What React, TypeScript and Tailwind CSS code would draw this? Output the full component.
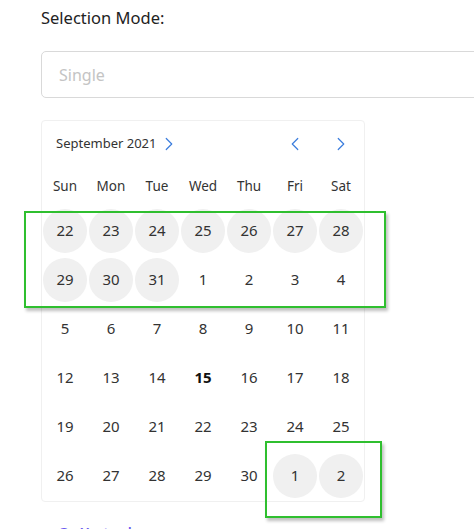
import { ChevronLeft, ChevronRight } from "lucide-react"

const WEEKDAYS = ["Sun", "Mon", "Tue", "Wed", "Thu", "Fri", "Sat"]

type Day = { n: number; marked?: boolean; today?: boolean }

const WEEKS: Day[][] = [
  [22, 23, 24, 25, 26, 27, 28].map((n) => ({ n, marked: true })),
  [
    { n: 29, marked: true },
    { n: 30, marked: true },
    { n: 31, marked: true },
    { n: 1 },
    { n: 2 },
    { n: 3 },
    { n: 4 },
  ],
  [5, 6, 7, 8, 9, 10, 11].map((n) => ({ n })),
  [12, 13, 14, 15, 16, 17, 18].map((n) => ({ n, today: n === 15 })),
  [19, 20, 21, 22, 23, 24, 25].map((n) => ({ n })),
  [
    { n: 26 },
    { n: 27 },
    { n: 28 },
    { n: 29 },
    { n: 30 },
    { n: 1, marked: true },
    { n: 2, marked: true },
  ],
]

export default function App() {
  return (
    <div
      className="relative h-[529px] w-[474px] overflow-hidden bg-white pl-[41px] pt-[6px] text-[#333]"
      style={{ fontFamily: '"Noto Sans", "Open Sans", sans-serif' }}
    >
      <div className="h-6 text-[16.5px] leading-6 text-[#222]">Selection Mode:</div>

      <div className="mt-[21px] flex h-[47px] w-[460px] items-center rounded-[5px] border border-[#d9d9d9] px-[17px] text-[16px] text-[#c4c4c4]">
        Single
      </div>

      <div className="mt-[22px] w-[324px] rounded-[4px] border border-[#f0f0f0] pb-[1px]">
        <div className="flex h-[45px] items-center pl-[14px] text-[13px]">
          <span>September 2021</span>
          <ChevronRight size={22} strokeWidth={1.3} className="ml-[2px] text-[#3b7ddd]" />
          <div className="ml-auto flex items-center">
            <div className="flex w-[46px] justify-center">
              <ChevronLeft size={22} strokeWidth={1.3} className="text-[#3b7ddd]" />
            </div>
            <div className="flex w-[46px] justify-center">
              <ChevronRight size={22} strokeWidth={1.3} className="text-[#3b7ddd]" />
            </div>
          </div>
        </div>

        <div className="grid h-[40px] grid-cols-7 items-center text-center text-[13.5px]">
          {WEEKDAYS.map((d) => (
            <span key={d}>{d}</span>
          ))}
        </div>

        {WEEKS.map((week, i) => (
          <div key={i} className="grid h-[49px] grid-cols-7 items-center">
            {week.map((day, j) => (
              <div key={j} className="flex justify-center">
                <div
                  className={
                    "flex size-[44px] items-center justify-center rounded-full text-[15px] " +
                    (day.marked ? "bg-[#f0f0f0] " : "") +
                    (day.today ? "font-bold text-[#111]" : "")
                  }
                >
                  {day.n}
                </div>
              </div>
            ))}
          </div>
        ))}
      </div>

      <div className="mt-[20px] pl-[17px] text-[14px] font-semibold text-[#6b5cf0]">Go Yesterday</div>

      {/* annotation boxes */}
      <div className="absolute left-[24px] top-[211px] h-[97px] w-[362px] border-2 border-[#2fbf2f] shadow-[2px_3px_3px_rgba(0,0,0,0.25)]" />
      <div className="absolute left-[265px] top-[441px] h-[77px] w-[117px] border-2 border-[#2fbf2f] shadow-[2px_3px_3px_rgba(0,0,0,0.25)]" />
    </div>
  )
}
